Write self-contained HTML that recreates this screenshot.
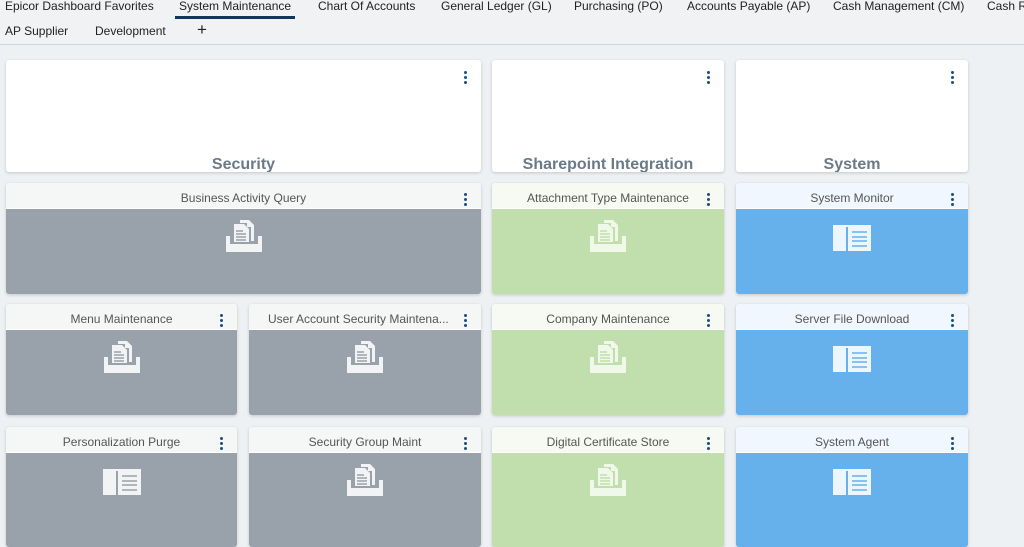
<!DOCTYPE html><html><head><style>
body{margin:0;width:1024px;height:532px;overflow:hidden;background:#eef1f4;font-family:"Liberation Sans",sans-serif;position:relative}
.tabs{position:absolute;left:0;top:0;width:1024px;height:44px;background:#f0f2f4;border-bottom:1px solid #d3d7db;font-size:12px;color:#222}
.tab{position:absolute;white-space:nowrap}
.ul{position:absolute;left:175px;top:16px;width:120px;height:3px;background:#12365e}
.card{position:absolute;border-radius:3px;box-shadow:0 1px 3px rgba(0,0,0,.18);overflow:hidden}
.big{background:#fff}
.big .t{position:absolute;bottom:-2px;width:100%;text-align:center;font-size:16px;font-weight:bold;color:#6b7a88}
.dots{position:absolute;right:14px;width:3px}
.dots i{display:block;width:3px;height:3px;border-radius:50%;background:#1a4f86;margin-bottom:2px}
.hd{position:absolute;left:0;top:0;right:0;height:25px;border-bottom:1px solid #fff;text-align:center;font-size:12px;line-height:31px;color:#555}
.bd{position:absolute;left:0;top:26px;right:0;bottom:0}
.g .hd{background:#f5f6f6}.g .bd{background:#99a1aa}
.gr .hd{background:#f6faf2}.gr .bd{background:#c0dfac}
.b .hd{background:#f0f7fe}.b .bd{background:#66b0ec}
.ic{position:absolute;left:50%;top:10px;margin-left:-19px}
</style></head><body>
<div class="tabs">
<span class="tab" style="left:5px;top:-1px">Epicor Dashboard Favorites</span>
<span class="tab" style="left:179px;top:-1px">System Maintenance</span>
<span class="tab" style="left:318px;top:-1px">Chart Of Accounts</span>
<span class="tab" style="left:441px;top:-1px">General Ledger (GL)</span>
<span class="tab" style="left:574px;top:-1px">Purchasing (PO)</span>
<span class="tab" style="left:687px;top:-1px">Accounts Payable (AP)</span>
<span class="tab" style="left:833px;top:-1px">Cash Management (CM)</span>
<span class="tab" style="left:987px;top:-1px">Cash R</span>
<span class="tab" style="left:5px;top:24px">AP Supplier</span>
<span class="tab" style="left:95px;top:24px">Development</span>
<span class="tab" style="left:197px;top:20px;font-size:17px">+</span>
<div class="ul"></div>
</div>
<svg width="0" height="0" style="position:absolute"><defs>
<g id="doc">
<path d="M15 1h9l5 5v16h-3V8h-4V4h-7z" fill="currentColor"/>
<path d="M9 5h10l5 5v13H9z" fill="currentColor"/>
<path d="M1 17h4v8h28v-8h4v16H1z" fill="currentColor"/>
</g>
<g id="book">
<rect x="0" y="0" width="13" height="26" fill="currentColor"/>
<rect x="15" y="0" width="23" height="26" fill="currentColor"/>
<rect x="0" y="0" width="38" height="2" fill="currentColor"/>
</g></defs></svg>

<div class="card big" style="left:6px;top:60px;width:475px;height:112px"><div class="dots" style="top:11px"><i></i><i></i><i></i></div><div class="t">Security</div></div>
<div class="card big" style="left:492px;top:60px;width:232px;height:112px"><div class="dots" style="top:11px"><i></i><i></i><i></i></div><div class="t">Sharepoint Integration</div></div>
<div class="card big" style="left:736px;top:60px;width:232px;height:112px"><div class="dots" style="top:11px"><i></i><i></i><i></i></div><div class="t">System</div></div>

<!-- row1 -->
<div class="card g" style="left:6px;top:183px;width:475px;height:111px"><div class="hd">Business Activity Query</div><div class="dots" style="top:10px"><i></i><i></i><i></i></div><div class="bd"><svg class="ic" width="38" height="34" style="color:#f2f3f4"><use href="#doc"/><path d="M11 12h7M11 15h10M11 18h10M11 21h10" stroke="#99a1aa" stroke-width="1.6"/></svg></div></div>
<div class="card gr" style="left:492px;top:183px;width:232px;height:111px"><div class="hd">Attachment Type Maintenance</div><div class="dots" style="top:10px"><i></i><i></i><i></i></div><div class="bd"><svg class="ic" width="38" height="34" style="color:#f0f8ea"><use href="#doc"/><path d="M11 12h7M11 15h10M11 18h10M11 21h10" stroke="#c0dfac" stroke-width="1.6"/></svg></div></div>
<div class="card b" style="left:736px;top:183px;width:232px;height:111px"><div class="hd">System Monitor</div><div class="dots" style="top:10px"><i></i><i></i><i></i></div><div class="bd"><svg class="ic" width="38" height="26" style="color:#eef6fd;top:16px"><use href="#book"/><path d="M19 7h15M19 12h15M19 16h15M19 21h15" stroke="#66b0ec" stroke-width="1.5"/></svg></div></div>

<!-- row2 -->
<div class="card g" style="left:6px;top:304px;width:231px;height:111px"><div class="hd">Menu Maintenance</div><div class="dots" style="top:10px"><i></i><i></i><i></i></div><div class="bd"><svg class="ic" width="38" height="34" style="color:#f2f3f4"><use href="#doc"/><path d="M11 12h7M11 15h10M11 18h10M11 21h10" stroke="#99a1aa" stroke-width="1.6"/></svg></div></div>
<div class="card g" style="left:249px;top:304px;width:232px;height:111px"><div class="hd" style="text-align:left;padding-left:19px">User Account Security Maintena...</div><div class="dots" style="top:10px"><i></i><i></i><i></i></div><div class="bd"><svg class="ic" width="38" height="34" style="color:#f2f3f4"><use href="#doc"/><path d="M11 12h7M11 15h10M11 18h10M11 21h10" stroke="#99a1aa" stroke-width="1.6"/></svg></div></div>
<div class="card gr" style="left:492px;top:304px;width:232px;height:111px"><div class="hd">Company Maintenance</div><div class="dots" style="top:10px"><i></i><i></i><i></i></div><div class="bd"><svg class="ic" width="38" height="34" style="color:#f0f8ea"><use href="#doc"/><path d="M11 12h7M11 15h10M11 18h10M11 21h10" stroke="#c0dfac" stroke-width="1.6"/></svg></div></div>
<div class="card b" style="left:736px;top:304px;width:232px;height:111px"><div class="hd">Server File Download</div><div class="dots" style="top:10px"><i></i><i></i><i></i></div><div class="bd"><svg class="ic" width="38" height="26" style="color:#eef6fd;top:16px"><use href="#book"/><path d="M19 7h15M19 12h15M19 16h15M19 21h15" stroke="#66b0ec" stroke-width="1.5"/></svg></div></div>

<!-- row3 -->
<div class="card g" style="left:6px;top:427px;width:231px;height:120px"><div class="hd">Personalization Purge</div><div class="dots" style="top:10px"><i></i><i></i><i></i></div><div class="bd"><svg class="ic" width="38" height="26" style="color:#f2f3f4;top:16px"><use href="#book"/><path d="M19 7h15M19 12h15M19 16h15M19 21h15" stroke="#99a1aa" stroke-width="1.5"/></svg></div></div>
<div class="card g" style="left:249px;top:427px;width:232px;height:120px"><div class="hd">Security Group Maint</div><div class="dots" style="top:10px"><i></i><i></i><i></i></div><div class="bd"><svg class="ic" width="38" height="34" style="color:#f2f3f4"><use href="#doc"/><path d="M11 12h7M11 15h10M11 18h10M11 21h10" stroke="#99a1aa" stroke-width="1.6"/></svg></div></div>
<div class="card gr" style="left:492px;top:427px;width:232px;height:120px"><div class="hd">Digital Certificate Store</div><div class="dots" style="top:10px"><i></i><i></i><i></i></div><div class="bd"><svg class="ic" width="38" height="34" style="color:#f0f8ea"><use href="#doc"/><path d="M11 12h7M11 15h10M11 18h10M11 21h10" stroke="#c0dfac" stroke-width="1.6"/></svg></div></div>
<div class="card b" style="left:736px;top:427px;width:232px;height:120px"><div class="hd">System Agent</div><div class="dots" style="top:10px"><i></i><i></i><i></i></div><div class="bd"><svg class="ic" width="38" height="26" style="color:#eef6fd;top:16px"><use href="#book"/><path d="M19 7h15M19 12h15M19 16h15M19 21h15" stroke="#66b0ec" stroke-width="1.5"/></svg></div></div>
</body></html>
